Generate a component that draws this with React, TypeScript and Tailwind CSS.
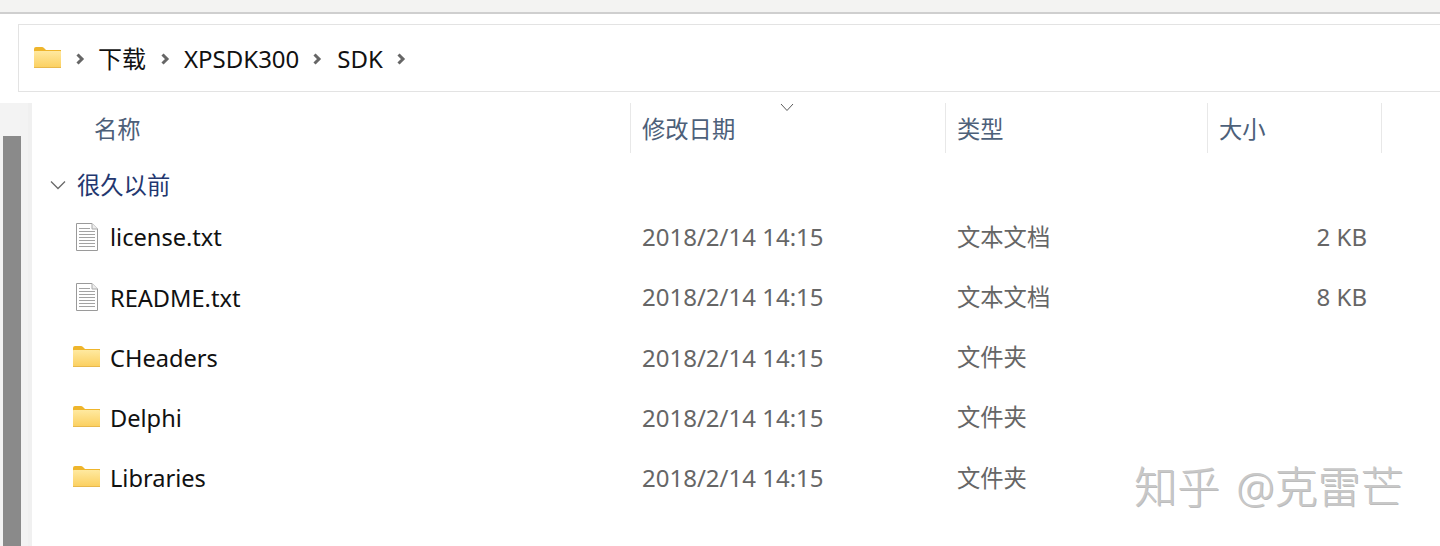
const FONT = "font-['Noto_Sans','Noto_Sans_CJK_SC',sans-serif]";

function Folder({ className = "" }: { className?: string }) {
  return (
    <svg width="27" height="21" viewBox="0 0 27 21" className={className}>
      <defs>
        <linearGradient id="fg" x1="0" y1="0" x2="0" y2="1">
          <stop offset="0" stopColor="#ffe9a0" />
          <stop offset="1" stopColor="#fbcf5e" />
        </linearGradient>
      </defs>
      <path d="M0 2Q0 0 2 0H8Q9 0 10 1L12 3H27V20H0Z" fill="#eeb52c" />
      <rect x="0" y="4" width="27" height="17" rx="0.500" fill="url(#fg)" />
      <rect x="0" y="20" width="27" height="1" fill="#e8b84c" />
    </svg>
  );
}

function FileIcon() {
  return (
    <svg width="22" height="28" viewBox="0 0 22 28">
      <path d="M0.500 0.500H16L21.500 6V27.500H0.500Z" fill="#fff" stroke="#9a9a9a" />
      <path d="M16 0.500V6H21.500" fill="#eee" stroke="#a8a8a8" />
      <path
        d="M3 5.500H14M3 8.500H19M3 11.500H19M3 14.500H19M3 17.500H19M3 20.500H19M3 23.500H19"
        stroke="#a3a3a3"
        strokeWidth="1"
      />
    </svg>
  );
}

function Crumb() {
  return (
    <svg width="10" height="14" viewBox="0 0 10 14" fill="none">
      <path d="M2.500 2.500L7 7L2.500 11.500" stroke="#666" strokeWidth="3" />
    </svg>
  );
}

const rows = [
  { name: "license.txt", kind: "文本文档", size: "2 KB", file: true },
  { name: "README.txt", kind: "文本文档", size: "8 KB", file: true },
  { name: "CHeaders", kind: "文件夹", size: "", file: false },
  { name: "Delphi", kind: "文件夹", size: "", file: false },
  { name: "Libraries", kind: "文件夹", size: "", file: false },
];

const GRID = "grid grid-cols-[598px_315px_262px_175px]";

export default function App() {
  return (
    <div className={`${FONT} relative h-[546px] w-[1440px] overflow-hidden bg-white text-[24px]`}>
      <div className="h-[14px] border-b-2 border-[#cfcfcf] bg-[#f3f3f2]" />
      <div className="pl-[18px] pt-[10px]">
        <div className="flex h-[68px] items-center border border-r-0 border-[#e3e3e3] pl-[15px] pt-[2px] text-[#111]">
          <Folder className="mb-[4px]" />
          <span className="ml-[14px]"><Crumb /></span>
          <span className="ml-[13px]">下载</span>
          <span className="ml-[14px]"><Crumb /></span>
          <span className="ml-[14px]">XPSDK300</span>
          <span className="ml-[13px]"><Crumb /></span>
          <span className="ml-[15px]">SDK</span>
          <span className="ml-[13px]"><Crumb /></span>
        </div>
      </div>
      <div className="mt-[11px] flex h-[443px]">
        <div className="flex w-[32px] border-r-[4px] border-[#f0f0f0] bg-white">
          <div className="w-[28px] bg-[#f3f3f3] pl-[3px] pt-[33px]">
            <div className="h-full w-[18px] bg-[#8a8a8a]" />
          </div>
        </div>
        <div className="flex-1">
          <div className={`${GRID} relative h-[50px] items-center text-[23.3px] text-[#4d6079]`}>
            <span className="pl-[62px] pt-[2px]">名称</span>
            <span className="flex h-full items-center border-l border-[#e8e8e8] pl-[11px] pt-[2px]">修改日期</span>
            <span className="flex h-full items-center border-l border-[#e8e8e8] pl-[11px] pt-[2px]">类型</span>
            <span className="flex h-full items-center border-x border-[#e8e8e8] pl-[11px] pt-[2px]">大小</span>
            <svg width="14" height="9" viewBox="0 0 14 9" fill="none" className="absolute left-[748px] top-0">
              <path d="M1 1L7 7.500L13 1" stroke="#5a5a5a" strokeWidth="1" />
            </svg>
          </div>
          <div className="flex h-[54px] items-start pl-[18px] pt-[15px] text-[23.3px] text-[#23376f]">
            <svg width="16" height="10" viewBox="0 0 16 10" fill="none" className="mt-[12px]">
              <path d="M1 1.500L8 8.500L15 1.500" stroke="#6a6a6a" strokeWidth="1.300" />
            </svg>
            <span className="ml-[11px]">很久以前</span>
          </div>
          {rows.map((r) => (
            <div key={r.name} className={`${GRID} h-[60.25px] items-center text-[#666]`}>
              <span className="flex items-center text-[23.6px] text-[#111]">
                <span className="flex w-[78px] justify-center pl-[31px]">
                  {r.file ? <FileIcon /> : <Folder className="mb-[3px]" />}
                </span>
                <span className="pt-[2px]">{r.name}</span>
              </span>
              <span className="pl-[12px]">2018/2/14 14:15</span>
              <span className="pl-[12px] text-[23.3px]">{r.kind}</span>
              <span className="pr-[15px] text-right">{r.size}</span>
            </div>
          ))}
        </div>
      </div>
      <div className="absolute left-[1134px] top-[459px] text-[43px] font-light leading-[56px] whitespace-nowrap text-[#c8c8c8] [word-spacing:5px] [text-shadow:1px_1px_0_#bcbcbc]">
        知乎 @克雷芒
      </div>
    </div>
  );
}
